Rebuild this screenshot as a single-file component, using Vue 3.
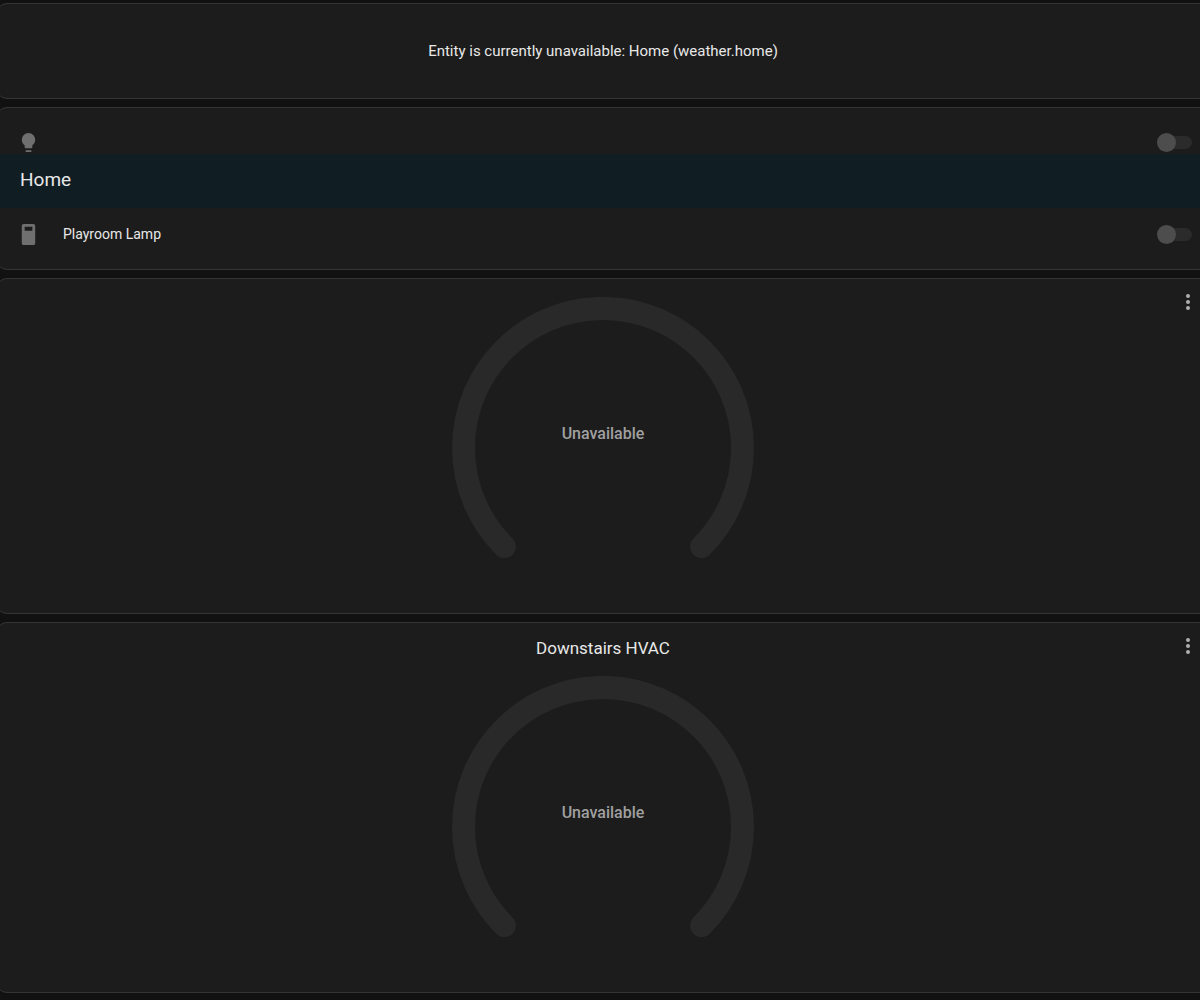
<script setup>
import { ref } from 'vue'

const message = 'Entity is currently unavailable: Home (weather.home)'

const lights = ref([
  {
    id: 'light',
    name: '',
    on: false,
    icon: 'M12,2A7,7 0 0,0 5,9C5,11.38 6.19,13.47 8,14.74V17A1,1 0 0,0 9,18H15A1,1 0 0,0 16,17V14.74C17.81,13.47 19,11.38 19,9A7,7 0 0,0 12,2M9,21A1,1 0 0,0 10,22H14A1,1 0 0,0 15,21V20H9V21Z',
  },
  {
    id: 'playroom',
    name: 'Playroom Lamp',
    on: false,
    icon: 'M7,1C5.9,1 5,1.9 5,3V21C5,22.1 5.9,23 7,23H17C18.1,23 19,22.1 19,21V3C19,1.9 18.1,1 17,1H7M8,4H16V8H8V4Z',
  },
])

const thermostats = [
  { id: 'upstairs', title: '', state: 'Unavailable' },
  { id: 'downstairs', title: 'Downstairs HVAC', state: 'Unavailable' },
]
</script>

<template>
  <div class="page">
    <main class="view">
      <section class="card warning">{{ message }}</section>

      <section class="card entities">
        <div class="row row-first">
          <svg class="icon" viewBox="0 0 24 24" aria-hidden="true"><path :d="lights[0].icon" /></svg>
          <input v-model="lights[0].on" class="switch" type="checkbox" role="switch" aria-label="Light" disabled />
        </div>
        <header class="bar"><h1>Home</h1></header>
        <div class="row row-last">
          <svg class="icon" viewBox="0 0 24 24" aria-hidden="true"><path :d="lights[1].icon" /></svg>
          <label class="name" :for="lights[1].id">{{ lights[1].name }}</label>
          <input :id="lights[1].id" v-model="lights[1].on" class="switch" type="checkbox" role="switch" disabled />
        </div>
      </section>

      <section v-for="item in thermostats" :key="item.id" class="card thermostat">
        <h2 v-if="item.title" class="title">{{ item.title }}</h2>
        <button class="more" type="button" aria-label="More info">
          <svg viewBox="0 0 24 24" aria-hidden="true">
            <path d="M12,16A2,2 0 0,1 14,18A2,2 0 0,1 12,20A2,2 0 0,1 10,18A2,2 0 0,1 12,16M12,10A2,2 0 0,1 14,12A2,2 0 0,1 12,14A2,2 0 0,1 10,12A2,2 0 0,1 12,10M12,4A2,2 0 0,1 14,6A2,2 0 0,1 12,8A2,2 0 0,1 10,6A2,2 0 0,1 12,4Z" />
          </svg>
        </button>
        <div class="gauge">
          <svg class="dial" viewBox="-151 -151 302 262" aria-hidden="true">
            <path d="M-98.6,98.6A139.5,139.5 0 1 1 98.6,98.6" />
          </svg>
          <p class="state">{{ item.state }}</p>
        </div>
      </section>
    </main>
  </div>
</template>

<style>
body {
  background: #111;
}
</style>

<style scoped>
.page {
  overflow: hidden;
  background: #111;
  color: #e8e8e8;
  font-family: Roboto, "Noto Sans", sans-serif;
}
.view {
  display: flex;
  flex-direction: column;
  gap: 8px;
  margin: 0 -10px 0 -4px;
  padding: 3px 0 7px;
}
.card {
  position: relative;
  box-sizing: border-box;
  border: 1px solid #353535;
  border-radius: 11px;
  background: #1c1c1c;
}
.warning {
  padding: 34px 16px;
  font-size: 15px;
  line-height: 26px;
  text-align: center;
}
.row {
  display: flex;
  align-items: center;
  padding: 0 17px 0 20px;
}
.row-first {
  padding-top: 23px;
}
.row-last {
  padding-top: 15px;
  padding-bottom: 23px;
}
.icon {
  flex: none;
  width: 23px;
  height: 23px;
  fill: #6f6f6f;
}
.name {
  margin-left: 23px;
  font-size: 14px;
  line-height: 23px;
}
.switch {
  appearance: none;
  position: relative;
  width: 34px;
  height: 13px;
  margin: 0 0 0 auto;
  border-radius: 7px;
  background: #2b2b2b;
}
.switch::before {
  content: "";
  position: absolute;
  top: -3px;
  left: -1px;
  width: 19px;
  height: 19px;
  border-radius: 50%;
  background: #4d4d4d;
}
.switch:checked::before {
  left: 16px;
}
.bar {
  padding: 0 23px 2px;
  background: #101e24;
}
.bar h1 {
  margin: 0;
  font-size: 19px;
  font-weight: 400;
  line-height: 52px;
}
.thermostat {
  padding-bottom: 54px;
}
.title {
  margin: 0;
  padding-top: 12px;
  font-size: 17px;
  font-weight: 400;
  line-height: 26px;
  text-align: center;
}
.more {
  position: absolute;
  top: 0;
  right: 0;
  display: grid;
  place-items: center;
  width: 42px;
  height: 46px;
  padding: 0;
  border: 0;
  background: none;
}
.more svg {
  width: 24px;
  height: 24px;
  fill: #b0b0b0;
}
.gauge {
  display: grid;
  justify-items: center;
  padding-top: 18px;
}
.title ~ .gauge {
  padding-top: 15px;
}
.dial,
.state {
  grid-area: 1 / 1;
}
.dial {
  width: 302px;
  height: 262px;
}
.dial path {
  fill: none;
  stroke: #292929;
  stroke-width: 23;
  stroke-linecap: round;
}
.state {
  margin: 0;
  padding-top: 125px;
  color: #a0a0a0;
  font-size: 16px;
  font-weight: 500;
  line-height: 24px;
}
</style>
